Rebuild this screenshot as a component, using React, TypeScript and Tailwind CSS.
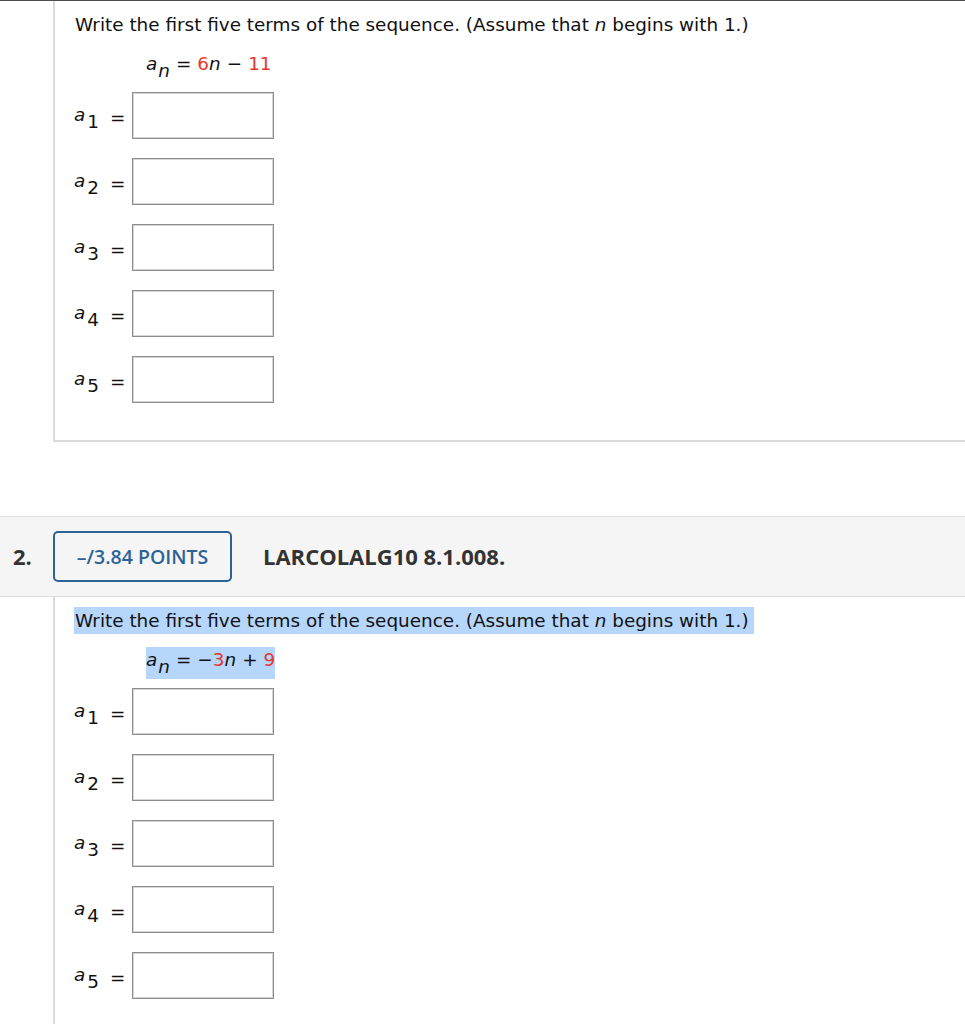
import type { ReactNode } from 'react'

const body = { fontFamily: '"DejaVu Sans", Verdana, sans-serif' }
const head = { fontFamily: '"Open Sans", "Liberation Sans", sans-serif' }

function Red({ children }: { children: ReactNode }) {
  return <span className="text-[#e6362b]">{children}</span>
}

function Sub({ children }: { children: ReactNode }) {
  return <span className="align-[-0.4em]">{children}</span>
}

function Op({ children }: { children: ReactNode }) {
  return <span className="mx-[6px]">{children}</span>
}

function AnswerRow({ k }: { k: number }) {
  return (
    <div className="flex items-center h-[47px]">
      <div className="w-[36px] mt-[5px]">
        <i>a</i>
        <span className="ml-[2px]">
          <Sub>{k}</Sub>
        </span>
      </div>
      <div className="w-[22px] mt-[5px]">=</div>
      <div className="w-[142px] h-[47px] border border-[#8c8c8c] bg-white shadow-[inset_0_0_0_1px_#d6d6d6]" />
    </div>
  )
}

function Problem({ formula, selected }: { formula: ReactNode; selected?: boolean }) {
  const hl = selected ? 'bg-[#b7d6fb]' : ''
  return (
    <div className="pt-[10px] pl-[19px] text-[18.4px] text-[#111]" style={body}>
      <div className="h-[27px] leading-[27px]">
        <span className={`inline-block pl-[1px] pr-[5px] ${hl}`}>
          Write the first five terms of the sequence. (Assume that <i>n</i> begins with 1.)
        </span>
      </div>
      <div className="mt-[13px] h-[25px] leading-[25px] pl-[72px]">
        <span className={`inline-block ${hl}`}>{formula}</span>
      </div>
      <div className="mt-[16px] flex flex-col gap-[19px]">
        {[1, 2, 3, 4, 5].map(k => (
          <AnswerRow key={k} k={k} />
        ))}
      </div>
    </div>
  )
}

export default function App() {
  const f1 = (
    <>
      <i>a</i>
      <i className="ml-[1px]">
        <Sub>n</Sub>
      </i>
      <Op>=</Op>
      <Red>6</Red>
      <i>n</i>
      <Op>−</Op>
      <Red>11</Red>
    </>
  )
  const f2 = (
    <>
      <i>a</i>
      <i className="ml-[1px]">
        <Sub>n</Sub>
      </i>
      <Op>=</Op>
      −<Red>3</Red>
      <i>n</i>
      <Op>+</Op>
      <Red>9</Red>
    </>
  )

  return (
    <div className="w-[965px] h-[1024px] overflow-hidden bg-white border-t border-[#4d4d4d]">
      {/* Question 1, tail end */}
      <div className="ml-[53px] h-[441px] border-l-2 border-b-2 border-[#dadada]">
        <Problem formula={f1} />
      </div>

      {/* Question 2 header */}
      <div className="mt-[74px] bg-[#f5f5f5] border-y border-[#dddddd] py-[14px] flex items-center" style={head}>
        <div className="w-[53px] pl-[13px] text-[22px] font-bold text-[#333]">2.</div>
        <div className="w-[179px] h-[51px] rounded-[5px] border-2 border-[#2c6397] flex items-center justify-center text-[19.5px] text-[#2c6397] font-semibold">
          –/3.84 POINTS
        </div>
        <div className="ml-[31px] text-[22px] font-bold text-[#333]">LARCOLALG10 8.1.008.</div>
      </div>

      {/* Question 2 */}
      <div className="ml-[53px] h-[440px] border-l-2 border-[#dadada]">
        <Problem formula={f2} selected />
      </div>
    </div>
  )
}
